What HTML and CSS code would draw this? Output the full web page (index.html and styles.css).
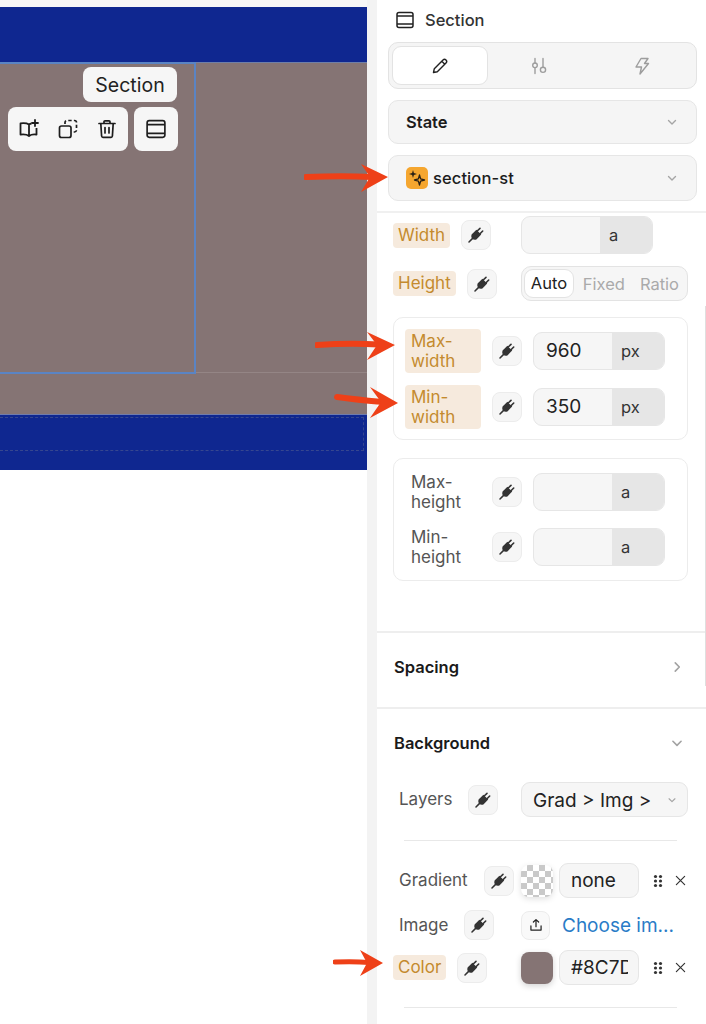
FILE: index.html
```html
<!DOCTYPE html>
<html lang="en">
<head>
<meta charset="utf-8">
<title>Section settings</title>
<link rel="stylesheet" href="styles.css">
</head>
<body>
<svg class="defs" width="0" height="0" aria-hidden="true">
  <symbol id="plug" viewBox="0 0 16 16">
    <path d="M1 15 L4.6 11.4" fill="none" stroke="currentColor" stroke-width="1.5" stroke-linecap="round"/>
    <path d="M3.6 7.6 L8.4 2.8 L13.2 7.6 L8.4 12.4 C6.9 13 5.3 12.7 4.2 11.8 C3.3 10.7 3 9.1 3.6 7.6Z" fill="currentColor"/>
    <path d="M9.2 4 L12 1.4 M12 6.8 L14.7 4" fill="none" stroke="currentColor" stroke-width="1.6" stroke-linecap="round"/>
  </symbol>
  <symbol id="layout" viewBox="0 0 18 18">
    <rect x="1" y="1.5" width="16" height="15" rx="2" fill="none" stroke="currentColor" stroke-width="1.5"/>
    <path d="M1 5 H17 M1 13 H17" fill="none" stroke="currentColor" stroke-width="1.5"/>
  </symbol>
  <symbol id="chev" viewBox="0 0 12 12">
    <path d="M2.5 4.5 L6 8 L9.5 4.5" fill="none" stroke="currentColor" stroke-width="1.4" stroke-linecap="round" stroke-linejoin="round"/>
  </symbol>
  <symbol id="grip" viewBox="0 0 10 14">
    <g fill="currentColor"><circle cx="2.5" cy="2.5" r="1.6"/><circle cx="7.5" cy="2.5" r="1.6"/><circle cx="2.5" cy="7" r="1.6"/><circle cx="7.5" cy="7" r="1.6"/><circle cx="2.5" cy="11.5" r="1.6"/><circle cx="7.5" cy="11.5" r="1.6"/></g>
  </symbol>
  <symbol id="close" viewBox="0 0 12 12">
    <path d="M1.5 1.5 L10.5 10.5 M10.5 1.5 L1.5 10.5" fill="none" stroke="currentColor" stroke-width="1.3" stroke-linecap="round"/>
  </symbol>
</svg>

<div class="app">
  <main class="canvas">
    <div class="band band-top"></div>
    <div class="stage">
      <div class="selection"></div>
      <div class="guide"></div>
      <div class="tag">Section</div>
      <div class="tools">
        <div class="toolgroup">
          <svg class="tool" viewBox="0 0 20 20"><path d="M10 5.5 C8 4.2 5 4 1.5 4.4 V15.6 C5 15.2 8 15.5 10 17 C12 15.5 14.5 15.2 17.5 15.6 V9 M10 5.5 C10.8 5 11.5 4.7 12.5 4.5 M10 5.5 V17" fill="none" stroke="currentColor" stroke-width="1.8" stroke-linejoin="round"/><path d="M16 1 V7 M13 4 H19" fill="none" stroke="currentColor" stroke-width="1.8" stroke-linecap="round"/></svg>
          <svg class="tool" viewBox="0 0 20 20"><rect x="1.5" y="7" width="11.5" height="11.5" rx="2" fill="none" stroke="currentColor" stroke-width="1.7"/><path d="M7 5 V3.5 A2 2 0 0 1 9 1.5 H16.5 A2 2 0 0 1 18.5 3.5 V11 A2 2 0 0 1 16.5 13 H15" fill="none" stroke="currentColor" stroke-width="1.7" stroke-dasharray="3.4 2.2"/></svg>
          <svg class="tool" viewBox="0 0 20 20"><path d="M2 4.5 H18 M7 4.5 V2.8 A1 1 0 0 1 8 1.8 H12 A1 1 0 0 1 13 2.8 V4.5 M3.8 4.5 L4.6 17 A1.5 1.5 0 0 0 6 18.3 H14 A1.5 1.5 0 0 0 15.4 17 L16.2 4.5 M8 8.5 V14 M12 8.5 V14" fill="none" stroke="currentColor" stroke-width="1.7" stroke-linecap="round" stroke-linejoin="round"/></svg>
        </div>
        <div class="toolsingle"><svg class="tool"><use href="#layout"/></svg></div>
      </div>
    </div>
    <div class="band band-bottom"><div class="dashed"></div></div>
  </main>

  <aside class="panel">
    <div class="scrollthumb"></div>
    <header class="panel-head"><svg class="head-icon"><use href="#layout"/></svg><span>Section</span></header>

    <div class="tabs">
      <div class="tab tab-on"><svg viewBox="0 0 18 18"><path d="M2.5 15.5 L3.3 11.7 L12 3 A1.8 1.8 0 0 1 15 6 L6.3 14.7 Z M10.8 4.2 L13.8 7.2" fill="none" stroke="currentColor" stroke-width="1.4" stroke-linejoin="round"/></svg></div>
      <div class="tab"><svg viewBox="0 0 18 18"><path d="M5 1.5 V6 M5 11 V16.5 M13 1.5 V10" fill="none" stroke="currentColor" stroke-width="1.4" stroke-linecap="round"/><circle cx="5" cy="8.3" r="2.3" fill="none" stroke="currentColor" stroke-width="1.4"/><circle cx="13" cy="12.8" r="2.6" fill="none" stroke="currentColor" stroke-width="1.4"/></svg></div>
      <div class="tab"><svg viewBox="0 0 18 18"><path d="M8 1.5 H15 L11.5 6.5 H15.5 L7 17 L8.5 10 H3 Z" fill="none" stroke="currentColor" stroke-width="1.4" stroke-linejoin="round"/></svg></div>
    </div>

    <div class="select select-state"><strong>State</strong><svg class="chev"><use href="#chev"/></svg></div>
    <div class="select select-class">
      <span class="spark"><svg viewBox="0 0 18 18"><path d="M11.5 6 L12.6 9.9 L16.5 11 L12.6 12.1 L11.5 16 L10.4 12.1 L6.5 11 L10.4 9.9 Z" fill="none" stroke="#2a2014" stroke-width="1.3" stroke-linejoin="round"/><path d="M5 1 L5.9 4.1 L9 5 L5.9 5.9 L5 9 L4.1 5.9 L1 5 L4.1 4.1 Z" fill="#2a2014"/></svg></span>
      <strong class="class-name">section-st</strong><svg class="chev"><use href="#chev"/></svg>
    </div>
    <div class="rule-top"></div>

    <div class="row row-width">
      <span class="label label-on">Width</span>
      <span class="plug"><svg><use href="#plug"/></svg></span>
      <div class="ctl"><div class="field field-width"><span class="value"></span><span class="unit">a</span></div></div>
    </div>
    <div class="row row-height">
      <span class="label label-on">Height</span>
      <span class="plug"><svg><use href="#plug"/></svg></span>
      <div class="ctl"><div class="seg"><span class="seg-on">Auto</span><span>Fixed</span><span>Ratio</span></div></div>
    </div>

    <section class="box box-one">
      <div class="boxrow">
        <span class="boxlabel label-on">Max-<br>width</span>
        <span class="plug"><svg><use href="#plug"/></svg></span>
        <div class="field"><span class="value">960</span><span class="unit">px</span></div>
      </div>
      <div class="boxrow">
        <span class="boxlabel label-on">Min-<br>width</span>
        <span class="plug"><svg><use href="#plug"/></svg></span>
        <div class="field"><span class="value">350</span><span class="unit">px</span></div>
      </div>
    </section>
    <section class="box box-two">
      <div class="boxrow">
        <span class="boxlabel">Max-<br>height</span>
        <span class="plug"><svg><use href="#plug"/></svg></span>
        <div class="field"><span class="value"></span><span class="unit">a</span></div>
      </div>
      <div class="boxrow">
        <span class="boxlabel">Min-<br>height</span>
        <span class="plug"><svg><use href="#plug"/></svg></span>
        <div class="field"><span class="value"></span><span class="unit">a</span></div>
      </div>
    </section>

    <div class="rule-full rule-spacing"></div>
    <div class="sect sect-sp"><strong>Spacing</strong><svg class="sect-chev sect-chev-right"><use href="#chev"/></svg></div>
    <div class="rule-full"></div>
    <div class="sect sect-bg"><strong>Background</strong><svg class="sect-chev"><use href="#chev"/></svg></div>

    <div class="row row-layers">
      <span class="label label-plain">Layers</span>
      <span class="plug"><svg><use href="#plug"/></svg></span>
      <div class="ctl"><div class="layers"><span>Grad &gt; Img &gt;</span><svg class="chev"><use href="#chev"/></svg></div></div>
    </div>
    <div class="rule-in rule-layers"></div>

    <div class="row row-gradient">
      <span class="label label-plain">Gradient</span>
      <span class="plug"><svg><use href="#plug"/></svg></span>
      <div class="ctl ctl-bg">
        <span class="swatch swatch-check"></span>
        <span class="hex">none</span>
        <svg class="grip"><use href="#grip"/></svg>
        <svg class="x"><use href="#close"/></svg>
      </div>
    </div>
    <div class="row row-image">
      <span class="label label-plain">Image</span>
      <span class="plug"><svg><use href="#plug"/></svg></span>
      <div class="ctl ctl-bg">
        <span class="upload"><svg viewBox="0 0 16 16"><path d="M8 10 V2 M5 4.6 L8 1.8 L11 4.6 M2.2 9 V13.8 H13.8 V9" fill="none" stroke="currentColor" stroke-width="1.4" stroke-linecap="round" stroke-linejoin="round"/></svg></span>
        <span class="link">Choose im...</span>
      </div>
    </div>
    <div class="row row-color">
      <span class="label label-on">Color</span>
      <span class="plug"><svg><use href="#plug"/></svg></span>
      <div class="ctl ctl-bg">
        <span class="swatch swatch-color"></span>
        <span class="hex"><span class="hex-clip">#8C7D</span></span>
        <svg class="grip"><use href="#grip"/></svg>
        <svg class="x"><use href="#close"/></svg>
      </div>
    </div>
    <div class="rule-in rule-end"></div>
  </aside>

  <svg class="arrow arrow-a" viewBox="0 0 84 30"><path d="M2 14 C25 13 50 13 68 14" fill="none" stroke="#ee4018" stroke-width="6" stroke-linecap="round"/><path d="M57 1 L84 14 L57 29 L66 14 Z" fill="#ee4018"/></svg>
  <svg class="arrow arrow-b" viewBox="0 0 80 30"><path d="M2 14 C25 12.5 45 12.5 64 13.5" fill="none" stroke="#ee4018" stroke-width="6" stroke-linecap="round"/><path d="M52 1 L80 14 L52 29 L62 14 Z" fill="#ee4018"/></svg>
  <svg class="arrow arrow-c" viewBox="0 0 64 32"><path d="M3 11 C20 13 35 15 50 16" fill="none" stroke="#ee4018" stroke-width="6" stroke-linecap="round"/><path d="M36 1 L64 17 L36 32 L47 16 Z" fill="#ee4018"/></svg>
  <svg class="arrow arrow-d" viewBox="0 0 50 28"><path d="M2 13 C15 12.5 25 12.5 36 13.5" fill="none" stroke="#ee4018" stroke-width="5" stroke-linecap="round"/><path d="M27 1 L50 14 L27 27 L34 14 Z" fill="#ee4018"/></svg>
</div>
</body>
</html>
```

FILE: styles.css
```css
* { box-sizing: border-box; }

html, body {
  margin: 0;
  height: 100%;
  overflow: hidden;
  background: #fff;
}

body {
  font-family: Inter, "Liberation Sans", sans-serif;
  color: #111;
}

.defs { position: absolute; }

.app {
  position: relative;
  display: flex;
  width: 706px;
  height: 1024px;
  overflow: hidden;
}

/* Canvas */
.canvas {
  width: 367px;
  flex: none;
  padding-top: 7px;
  background-color: #fff;
  background-image: linear-gradient(#f7f7f7, #f7f7f7);
  background-size: 100% 7px;
  background-repeat: no-repeat;
}

.band { background: #0f2790; }
.band-top { height: 55px; }
.band-bottom { height: 55px; padding-top: 2px; }

.dashed {
  height: 34px;
  margin-right: 3px;
  border: 1px dashed #36478f;
  border-left: 0;
}

.stage {
  position: relative;
  height: 353px;
  background: #857474;
  border-top: 1px solid #6f7fa8;
  border-bottom: 1px solid #6f7cad;
}

.selection {
  position: absolute;
  left: 0;
  top: -1px;
  width: 196px;
  height: 312px;
  border-top: 2px solid #5a84c4;
  border-right: 2px solid #5a84c4;
  border-bottom: 2px solid #5a84c4;
}

.guide {
  position: absolute;
  left: 196px;
  right: 0;
  top: 309px;
  border-top: 1px solid #948585;
}

.tag {
  position: absolute;
  left: 83px;
  top: 4px;
  width: 94px;
  height: 35px;
  border-radius: 8px;
  background: #f6f6f6;
  font-size: 19.5px;
  line-height: 36px;
  text-align: center;
  color: #222;
}

.tools {
  position: absolute;
  left: 8px;
  top: 44px;
  display: flex;
  gap: 6px;
}

.toolgroup, .toolsingle {
  display: flex;
  align-items: center;
  height: 44px;
  border-radius: 8px;
  background: #f6f6f6;
}

.toolgroup {
  width: 120px;
  padding-left: 11px;
  gap: 19px;
}

.toolsingle {
  width: 44px;
  justify-content: center;
}

.tool {
  width: 20px;
  height: 20px;
  color: #1d1d1d;
}

/* Panel */
.panel {
  position: relative;
  width: 339px;
  flex: none;
  padding-left: 11px;
  padding-right: 9px;
  border-left: 10px solid #f3f3f3;
  background: #fff;
}

.scrollthumb {
  position: absolute;
  right: 0;
  top: 306px;
  width: 1px;
  height: 380px;
  background: #dfdfdf;
}

.panel-head {
  display: flex;
  align-items: center;
  height: 42px;
  padding-bottom: 3px;
  padding-left: 8px;
  font-size: 16.5px;
  font-weight: 500;
  color: #333;
}

.panel-head span { margin-left: 11px; }

.head-icon {
  width: 18px;
  height: 18px;
  color: #222;
}

.tabs {
  display: grid;
  grid-template-columns: 96px 1fr 1fr;
  height: 47px;
  padding: 3px;
  border: 1px solid #e3e3e3;
  border-radius: 10px;
  background: #f5f5f5;
}

.tab {
  display: flex;
  align-items: center;
  justify-content: center;
  color: #9d9d9d;
}

.tab svg { width: 18px; height: 18px; }

.tab-on {
  background: #fff;
  border: 1px solid #e3e3e3;
  border-radius: 9px;
  color: #222;
}

.select {
  display: flex;
  align-items: center;
  padding: 0 18px 0 17px;
  border: 1px solid #e6e6e6;
  border-radius: 10px;
  background: #f5f5f5;
  font-size: 16.5px;
}

.select strong { font-weight: 600; color: #1c1c1c; }
.select-state { height: 44px; margin-top: 11px; }
.select-class { height: 46px; margin-top: 11px; }

.select .class-name {
  font-weight: 500;
  letter-spacing: 0.1px;
}

.chev {
  width: 12px;
  height: 12px;
  margin-left: auto;
  color: #a5a5a5;
}

.spark {
  display: flex;
  align-items: center;
  justify-content: center;
  width: 22px;
  height: 22px;
  margin-right: 5px;
  border-radius: 5px;
  background: #f5a62f;
}

.spark svg { width: 18px; height: 18px; }

.rule-top {
  height: 2px;
  margin: 10px -9px 0 -11px;
  background: #f0f0f0;
}

.row {
  display: flex;
  align-items: center;
  padding: 0 9px 0 5px;
}

.row-width { height: 38px; margin-top: 3px; }
.row-height { height: 35px; margin-top: 12px; }

.label {
  display: block;
  flex: none;
  height: 25px;
  padding: 0 5px;
  border-radius: 4px;
  font-size: 17px;
  line-height: 25px;
}

.label-on {
  background: #f6eadd;
  color: #c48a2e;
}

.label-plain {
  padding-left: 6px;
  color: #555;
}

.plug {
  display: flex;
  align-items: center;
  justify-content: center;
  flex: none;
  width: 30px;
  height: 30px;
  margin-left: 11px;
  border: 1px solid #ececec;
  border-radius: 8px;
  background: #f6f6f6;
  color: #333;
}

.plug svg { width: 16px; height: 16px; }

.ctl {
  display: flex;
  align-items: center;
  flex: none;
  width: 167px;
  margin-left: auto;
}

.field {
  display: flex;
  flex: none;
  width: 132px;
  height: 38px;
  overflow: hidden;
  border: 1px solid #e6e6e6;
  border-radius: 9px;
  background: #f6f6f6;
  font-size: 19px;
  line-height: 36px;
}

.value {
  width: 78px;
  padding-left: 12px;
  flex: none;
  color: #222;
}

.unit {
  flex: 1;
  padding-left: 9px;
  background: #e6e6e6;
  font-size: 16.5px;
  color: #333;
}

.seg {
  display: flex;
  align-items: center;
  width: 167px;
  height: 35px;
  padding: 2px;
  border: 1px solid #e3e3e3;
  border-radius: 10px;
  background: #f6f6f6;
  font-size: 16.5px;
  color: #aaa;
}

.seg span { padding-left: 9px; padding-right: 6px; }

.seg .seg-on {
  width: 52px;
  height: 29px;
  padding: 0;
  border: 1px solid #e3e3e3;
  border-radius: 9px;
  background: #fff;
  line-height: 27px;
  text-align: center;
  color: #222;
}

.box {
  display: flex;
  flex-direction: column;
  width: 295px;
  height: 123px;
  margin-left: 5px;
  padding: 11px 0 0 11px;
  border: 1px solid #ececec;
  border-radius: 10px;
}

.box-one { margin-top: 16px; gap: 12px; }
.box-two { margin-top: 18px; gap: 11px; }

.boxrow {
  display: flex;
  align-items: center;
  height: 44px;
}

.boxlabel {
  flex: none;
  width: 76px;
  height: 44px;
  padding: 2px 6px 0;
  border-radius: 4px;
  font-size: 17px;
  line-height: 20px;
  color: #555;
}

.boxlabel.label-on { color: #c48a2e; }
.boxrow .field { margin-left: 11px; }

.rule-full {
  height: 2px;
  margin: 0 -9px 0 -11px;
  background: #eeeeee;
}

.rule-spacing { margin-top: 50px; }

.sect {
  display: flex;
  align-items: center;
  height: 74px;
  padding: 0 13px 4px 6px;
  font-size: 16.5px;
}

.sect-sp { padding-bottom: 6px; }
.sect-bg { height: 71px; }

.sect strong { font-weight: 600; color: #1a1a1a; }

.sect-chev {
  width: 14px;
  height: 14px;
  margin-left: auto;
  color: #a3a3a3;
}

.sect-chev-right { transform: rotate(-90deg); }

.row-layers { height: 35px; margin-top: 2px; }

.layers {
  display: flex;
  align-items: center;
  width: 167px;
  height: 35px;
  padding: 1px 10px 0 11px;
  border: 1px solid #e6e6e6;
  border-radius: 9px;
  background: #f6f6f6;
  font-size: 19px;
  white-space: nowrap;
  color: #222;
}

.layers .chev { width: 10px; height: 10px; }

.rule-in {
  height: 1px;
  margin-left: 16px;
  margin-right: 20px;
  background: #e8e8e8;
}

.rule-layers { margin-top: 23px; }

.row-gradient { height: 35px; margin-top: 22px; }
.row-image { height: 30px; margin-top: 12px; }
.row-color { height: 35px; margin-top: 10px; }

.ctl-bg { gap: 6px; }

.swatch {
  flex: none;
  width: 32px;
  height: 32px;
  border-radius: 8px;
}

.swatch-check {
  background-color: #fff;
  background-image:
    linear-gradient(45deg, #c9c9c9 25%, transparent 25%, transparent 75%, #c9c9c9 75%),
    linear-gradient(45deg, #c9c9c9 25%, transparent 25%, transparent 75%, #c9c9c9 75%);
  background-size: 12px 12px;
  background-position: 0 0, 6px 6px;
  box-shadow: 0 2px 6px rgba(0, 0, 0, 0.12);
}

.swatch-color {
  background: #857474;
  box-shadow: 0 2px 6px rgba(0, 0, 0, 0.18);
}

.hex {
  flex: none;
  width: 80px;
  height: 35px;
  padding-left: 11px;
  border: 1px solid #e6e6e6;
  border-radius: 9px;
  background: #f6f6f6;
  font-size: 19px;
  line-height: 33px;
  color: #222;
}

.hex-clip {
  display: block;
  width: 57px;
  overflow: hidden;
  white-space: nowrap;
}

.grip {
  flex: none;
  width: 10px;
  height: 14px;
  margin-left: 8px;
  color: #333;
}

.x {
  flex: none;
  width: 11px;
  height: 11px;
  margin-left: 6px;
  color: #333;
}

.upload {
  display: flex;
  align-items: center;
  justify-content: center;
  flex: none;
  width: 29px;
  height: 29px;
  border: 1px solid #ececec;
  border-radius: 8px;
  background: #f9f9f9;
  color: #222;
}

.upload svg { width: 14px; height: 14px; }

.link {
  margin-left: 6px;
  font-size: 19px;
  white-space: nowrap;
  color: #2a7cc7;
}

.rule-end { margin-top: 22px; }

/* Annotation arrows over the screenshot */
.arrow { position: absolute; }
.arrow-a { left: 304px; top: 163px; width: 84px; height: 30px; }
.arrow-b { left: 315px; top: 331px; width: 80px; height: 30px; }
.arrow-c { left: 334px; top: 386px; width: 64px; height: 32px; }
.arrow-d { left: 333px; top: 949px; width: 50px; height: 28px; }
```
